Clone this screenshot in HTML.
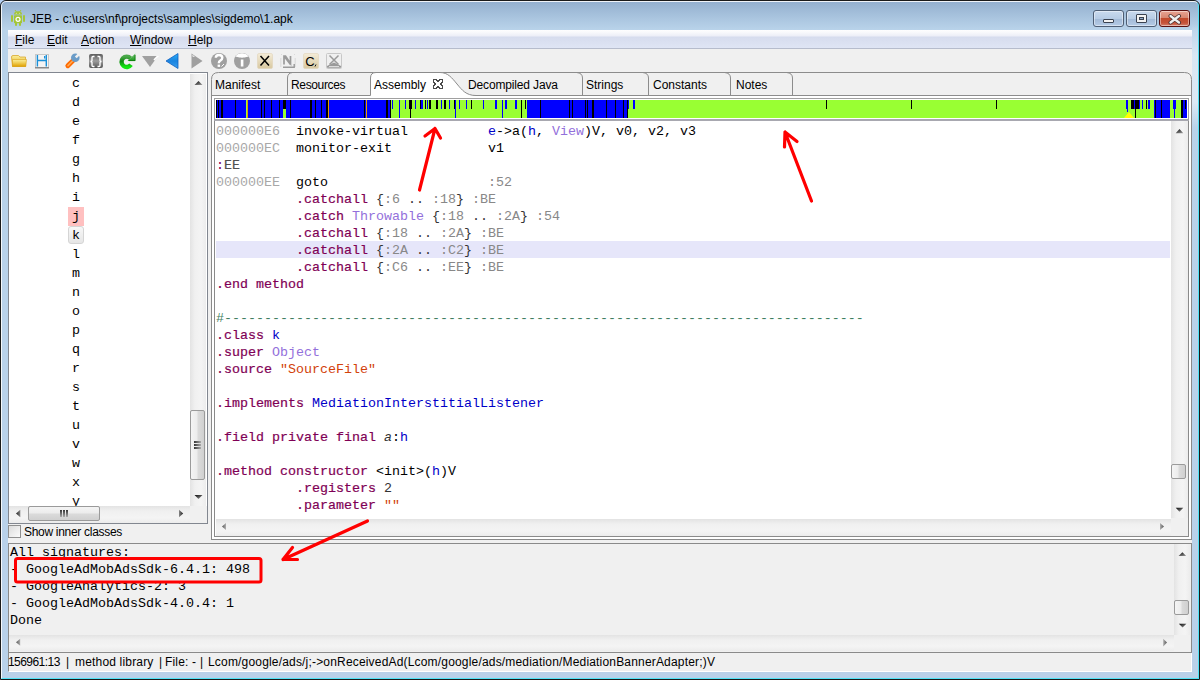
<!DOCTYPE html>
<html><head><meta charset="utf-8">
<style>
*{margin:0;padding:0;box-sizing:border-box}
html,body{width:1200px;height:680px;overflow:hidden;background:#b4d0f4;font-family:"Liberation Sans",sans-serif}
.a,i{position:absolute;display:block}
#win{position:absolute;left:0;top:0;width:1200px;height:680px;border:1px solid #1a1a1a;border-radius:6px 6px 0 0;background:linear-gradient(#92afcf 0,#98b4d2 4px,#abc6e0 18px,#b9d3ea 29px,#b9d1ea 100%);overflow:hidden}
#win:before{content:"";position:absolute;left:0;top:0;right:0;bottom:0;border:1px solid rgba(255,255,255,.85);border-right-color:#4fe3f7;border-bottom-color:#4fe3f7;border-radius:5px 5px 0 0}
.title{left:30px;top:12px;font-size:12px;color:#000;white-space:nowrap}
.wb{top:10px;height:17px;border:1px solid #4e5e74;border-radius:3px;background:linear-gradient(#c9daee 0,#b7cce5 50%,#a1b9d6 51%,#b5cbe6 100%);box-shadow:inset 0 0 0 1px rgba(255,255,255,.45)}
.menubar{left:8px;top:30px;width:1184px;height:19px;background:linear-gradient(#fefefe 0,#f6f7fb 3px,#eceef7 6px,#d6dcee 7px,#dfe5f4 18px);border-bottom:1px solid #b6bccc}
.menubar span{position:absolute;top:3px;font-size:12px;color:#000}
.toolbar{left:8px;top:49px;width:1184px;height:23px;background:#f0f0f0}
.client{left:8px;top:72px;width:1184px;height:600px;background:#f0f0f0}
.mono{font-family:"Liberation Mono",monospace}
.code{font-family:"Liberation Mono",monospace;font-size:13.33px;line-height:17px;white-space:pre;color:#000}
.sbv{background:linear-gradient(90deg,#e3e3e3,#f0f0f0 30%,#f4f4f4 70%,#ececec)}
.sbh{background:linear-gradient(#e3e3e3,#f0f0f0 30%,#f4f4f4 70%,#ececec)}
.tab{top:72px;height:24px;font-size:12px;color:#000;border:1px solid #8a8a8a;border-bottom:none;border-radius:7px 0 0 0;background:#f0f0f0;white-space:nowrap;padding:5px 0 0 3px}
.d{color:#7f0055;font-weight:normal;-webkit-text-stroke:0.2px #7f0055}
.g{color:#888}
.lg{color:#a8a8a8}
.bl{color:#0000c8}
.pu{color:#9370db}
.st{color:#d2420a}
.cm{color:#3f7f5f}
.st1{top:655px;font-size:12px;white-space:pre;letter-spacing:0.18px}
.list{left:9px;top:74px;width:181px;font-family:"Liberation Mono",monospace;font-size:13.33px;line-height:19px;white-space:pre}
.list div{padding-left:63px;height:19px}
</style></head><body>
<div id="win"></div>
<!-- title icon -->
<svg class="a" style="left:10px;top:9px" width="16" height="18" viewBox="0 0 16 18">
 <g fill="#a4c639">
  <rect x="1" y="6" width="2" height="7" rx="1"/><rect x="13" y="6" width="2" height="7" rx="1"/>
  <path d="M4 5.6 Q4 2.3 8 2.3 Q12 2.3 12 5.6 Z"/>
  <rect x="4" y="6.2" width="8" height="8" rx="0.8"/>
  <rect x="5" y="13" width="2" height="4" rx="1"/><rect x="9" y="13" width="2" height="4" rx="1"/>
  <path d="M5 1 L6.5 3 M11 1 L9.5 3" stroke="#a4c639" stroke-width="1"/>
 </g>
 <circle cx="8" cy="10.3" r="2" fill="none" stroke="#fff" stroke-width="1.2"/><circle cx="6.3" cy="4.2" r="0.5" fill="#e8f4c0"/><circle cx="9.7" cy="4.2" r="0.5" fill="#e8f4c0"/>
</svg>
<div class="a" style="left:1192px;top:24px;width:6px;height:104px;background:linear-gradient(rgba(255,255,255,0),rgba(255,255,255,.45) 30%,rgba(255,255,255,.5) 75%,rgba(255,255,255,0))"></div>
<div class="a title">JEB - c:\users\nf\projects\samples\sigdemo\1.apk</div>
<!-- window buttons -->
<div class="a wb" style="left:1093px;width:31px"><i style="left:9px;top:8px;width:11px;height:4px;background:#f2f2f2;border:1px solid #3a4250;border-radius:1px"></i></div>
<div class="a wb" style="left:1126px;width:31px"><i style="left:9px;top:3px;width:11px;height:9px;background:#f2f2f2;border:1px solid #3a4250;border-radius:1px"></i><i style="left:12px;top:6px;width:5px;height:3px;background:#8fa9c8;border:1px solid #3a4250"></i></div>
<div class="a wb" style="left:1159px;width:31px;border-color:#5a1010;background:linear-gradient(#e8a493 0,#d88771 45%,#c24a2c 50%,#c5533a 80%,#d7826e 100%)"><svg class="a" style="left:8px;top:2px" width="14" height="12" viewBox="0 0 14 12"><path d="M2.5 3 L11 9.5 M11 3 L2.5 9.5" stroke="#4a3030" stroke-width="4" stroke-linecap="round"/><path d="M2.5 3 L11 9.5 M11 3 L2.5 9.5" stroke="#f0f0f0" stroke-width="2.3" stroke-linecap="round"/></svg></div>

<div class="a menubar">
 <span style="left:7px"><u>F</u>ile</span>
 <span style="left:39px"><u>E</u>dit</span>
 <span style="left:73px"><u>A</u>ction</span>
 <span style="left:122px"><u>W</u>indow</span>
 <span style="left:180px"><u>H</u>elp</span>
</div>
<div class="a toolbar"></div>
<div class="a client"></div>
<svg class="a" style="left:0;top:49px" width="360" height="23" viewBox="0 49 360 23">
 <defs>
  <linearGradient id="fold" x1="0" y1="0" x2="0" y2="1"><stop offset="0" stop-color="#fbef9a"/><stop offset="0.45" stop-color="#f0cf5a"/><stop offset="1" stop-color="#e0a000"/></linearGradient>
  <linearGradient id="gbox" x1="0" y1="0" x2="0" y2="1"><stop offset="0" stop-color="#5e5e5e"/><stop offset="0.5" stop-color="#9c9c9c"/><stop offset="1" stop-color="#555"/></linearGradient>
  <linearGradient id="grn" x1="0" y1="0" x2="0" y2="1"><stop offset="0" stop-color="#4aa84a"/><stop offset="0.45" stop-color="#108a10"/><stop offset="1" stop-color="#10e810"/></linearGradient><linearGradient id="grh" x1="0" y1="0" x2="0" y2="1"><stop offset="0" stop-color="#80c880"/><stop offset="1" stop-color="#189818"/></linearGradient>
  <linearGradient id="blu" x1="0" y1="0" x2="0" y2="1"><stop offset="0" stop-color="#2ab0f8"/><stop offset="0.5" stop-color="#1a84e0"/><stop offset="1" stop-color="#3aa0f0"/></linearGradient>
  <linearGradient id="beige" x1="0" y1="0" x2="0" y2="1"><stop offset="0" stop-color="#f4ecd8"/><stop offset="1" stop-color="#d8c8a0"/></linearGradient>
 </defs>
 <!-- folder -->
 <path d="M11.5,57 Q11.5,55.5 13,55.5 H18.5 L20,57 H25.5 V66.5 H12.5 Z" fill="url(#fold)" stroke="#d8a830" stroke-width="0.8"/>
 <path d="M12.5,59.5 H26.5 L25.8,66.5 H12.5 Z" fill="url(#fold)" stroke="#d9a21c" stroke-width="0.6"/>
 <!-- save -->
 <rect x="35.5" y="54.5" width="13" height="13" fill="#f4f4f4" stroke="#c8c8c8"/>
 <rect x="35" y="67" width="14" height="1.5" fill="#8a8a8a"/>
 <path d="M37.4,55 V66.5 M46.3,55 V66.5 M37.4,60.5 H46.3" stroke="#1a90d8" stroke-width="1.4" fill="none"/>
 <rect x="44" y="56" width="1.3" height="2.5" fill="#1a90d8"/>
 <!-- wrench -->
 <path d="M67.8,65.8 L73,60.6" stroke="#ff6a00" stroke-width="4.8" stroke-linecap="round"/>
 <path d="M68,65.6 L72.8,60.8" stroke="#ffa850" stroke-width="1.6" stroke-linecap="round"/>
 <circle cx="75.3" cy="57.8" r="4.3" fill="#6a9cc8"/>
 <path d="M75.8,57.3 L79.5,53.6" stroke="#f0f0f0" stroke-width="2.6"/>
 <!-- {} -->
 <rect x="89" y="54" width="14" height="14" rx="2" fill="url(#gbox)"/>
 <path d="M94.5,56.5 H93 Q92,56.5 92,57.5 V60.5 Q92,61.5 90.5,61.5 Q92,61.5 92,62.5 V65.5 Q92,66.5 93,66.5 H94.5 M97.5,56.5 H99 Q100,56.5 100,57.5 V60.5 Q100,61.5 101.5,61.5 Q100,61.5 100,62.5 V65.5 Q100,66.5 99,66.5 H97.5" fill="none" stroke="#fff" stroke-width="1.35"/>
 <!-- refresh -->
 <path d="M130.5,58.2 A5.2,5.2 0 1 0 131,64.8" fill="none" stroke="url(#grn)" stroke-width="4.4"/>
 <path d="M127.5,61 H135.3 V53.5 Z" fill="url(#grh)"/>
 <path d="M129,60.6 H135 V55" fill="none" stroke="#0a7a0a" stroke-width="0.8"/>
 <!-- down triangle -->
 <path d="M142,56 H158 L150,67 Z" fill="#a0a0a0"/>
 <path d="M154,60 L157,56.8 H157.2 L157,57 Z" stroke="#fff" stroke-width="1.6"/>
 <!-- left blue triangle -->
 <path d="M178,53.5 V68.5 L166,61 Z" fill="url(#blu)" stroke="#1060c0" stroke-width="0.8"/>
 <!-- right gray triangle -->
 <path d="M191.5,53.5 V68.5 L202.5,61 Z" fill="#a0a0a0"/>
 <path d="M192.5,56.5 V54.8 L195,57 Z" fill="#fff"/>
 <!-- ? -->
 <circle cx="219" cy="61" r="8" fill="#a0a0a0"/>
 <path d="M215.8,57.8 Q215.8,55 219,55 Q222.3,55 222.3,57.8 Q222.3,59.6 220.3,60.6 Q218.8,61.4 218.8,63.2" fill="none" stroke="#fff" stroke-width="2.4"/>
 <rect x="217.6" y="64.6" width="2.5" height="2.3" fill="#fff"/>
 <path d="M221.5,66.5 L224,64" stroke="#fff" stroke-width="1"/>
 <!-- i -->
 <circle cx="242" cy="61" r="8" fill="#a0a0a0"/>
 <path d="M235.5,56.5 A8,8 0 0 1 248.5,56.5 L244.5,57.5 H239.5 Z" fill="#fff"/>
 <path d="M235.8,56.8 Q240,53 242,58 Q244,53 248.2,56.8 A8,8 0 0 0 235.8,56.8 Z" fill="#fff"/>
 <rect x="240.8" y="59.5" width="2.6" height="7" fill="#fff"/>
 <!-- X beige -->
 <rect x="257.5" y="53.5" width="15" height="15" rx="1.5" fill="url(#beige)" stroke="#e0d4b8" stroke-width="0.6"/>
 <path d="M260.5,56 L269,65.5 M269,56 L260.5,65.5" stroke="#000" stroke-width="1.5"/>
 <!-- N disabled -->
 <path d="M280.8,58 V67 M295.2,58 V67 M281,54 L282,55 M295,54 L294,55" stroke="#d4d4d4" stroke-width="0.8"/>
 <path d="M284,64.5 V56 H285.5 L290.5,63.5 V56 M284,56 L290.5,64.5" stroke="#9a9a9a" stroke-width="1.7" fill="none"/>
 <path d="M283,67.2 H294.2 V64" stroke="#9a9a9a" stroke-width="1.4" fill="none"/>
 <!-- C beige -->
 <rect x="303.5" y="53.5" width="15" height="15" rx="1.5" fill="url(#beige)" stroke="#e0d4b8" stroke-width="0.6"/>
 <text x="310" y="65.5" text-anchor="middle" font-family="Liberation Sans" font-size="13" fill="#000">C</text>
 <path d="M316,64.5 L315,66.5" stroke="#000" stroke-width="0.9"/>
 <!-- X disabled -->
 <rect x="326.5" y="53.5" width="15" height="15" rx="1" fill="none" stroke="#c8c8c8"/>
 <path d="M329.5,55.5 L338.5,64.5 M338.5,55.5 L329.5,64.5" stroke="#9a9a9a" stroke-width="1.5"/>
 <path d="M327,67.8 L327,66 L334,62.5 L341,66 V67.8 Z" fill="#9a9a9a"/>
 <path d="M329,66.5 H339" stroke="#eee" stroke-width="0.8"/>
 </svg>


<!-- left panel -->
<div class="a" style="left:8px;top:72px;width:200px;height:452px;border:1px solid #828790;background:#fff"></div>
<div class="a" style="left:68px;top:207px;width:16px;height:19px;background:#ffc0c0"></div>
<div class="a" style="left:68px;top:226px;width:16px;height:18px;border:1px solid #d5d5d5;border-radius:3px;background:linear-gradient(#f8f8f8,#e6e6e6)"></div>
<div class="a list"><div>c</div><div>d</div><div>e</div><div>f</div><div>g</div><div>h</div><div>i</div><div>j</div><div>k</div><div>l</div><div>m</div><div>n</div><div>o</div><div>p</div><div>q</div><div>r</div><div>s</div><div>t</div><div>u</div><div>v</div><div>w</div><div>x</div><div>y</div></div>
<div class="a sbv" style="left:190px;top:74px;width:16px;height:432px"></div>
<div class="a" style="left:190px;top:410px;width:15px;height:70px;border:1px solid #9a9a9a;border-radius:2px;background:linear-gradient(90deg,#f4f4f4,#ececec 45%,#dadada 55%,#d0d0d0)"></div>
<i style="left:194px;top:441px;width:7px;height:2px;background:linear-gradient(90deg,#333,#aaa)"></i><i style="left:194px;top:444px;width:7px;height:2px;background:linear-gradient(90deg,#333,#aaa)"></i><i style="left:194px;top:447px;width:7px;height:2px;background:linear-gradient(90deg,#333,#aaa)"></i>
<div class="a sbh" style="left:9px;top:506px;width:181px;height:17px"></div>
<div class="a" style="left:190px;top:506px;width:17px;height:17px;background:#f0f0f0"></div>
<div class="a" style="left:28px;top:506px;width:72px;height:15px;border:1px solid #9a9a9a;border-radius:2px;background:linear-gradient(#f4f4f4,#ececec 45%,#dadada 55%,#d0d0d0)"></div>
<i style="left:60px;top:510px;width:2px;height:7px;background:linear-gradient(#333,#aaa)"></i><i style="left:63px;top:510px;width:2px;height:7px;background:linear-gradient(#333,#aaa)"></i><i style="left:66px;top:510px;width:2px;height:7px;background:linear-gradient(#333,#aaa)"></i>

<!-- checkbox -->
<div class="a" style="left:8px;top:525px;width:13px;height:13px;border:1px solid #8f8f8f;background:linear-gradient(135deg,#dcdcdc,#fbfbfb)"></div>
<div class="a" style="left:24px;top:525px;font-size:12px;white-space:nowrap;letter-spacing:-0.3px">Show inner classes</div>

<!-- tab folder -->
<div class="a" style="left:211px;top:95px;width:981px;height:445px;border:1px solid #8a8a8a;border-top:none;background:#fff"></div>
<i style="left:211px;top:95px;width:981px;height:1px;background:#8a8a8a"></i>
<div class="a" style="left:214px;top:98px;width:975px;height:439px;border:1px solid #8a8a8a;background:#fff"></div>
<svg class="a" style="left:0;top:0" width="1200" height="100" viewBox="0 0 1200 100">
 <path d="M211.5,96 V79.5 Q211.5,72.5 218.5,72.5 H1184.5 Q1191.5,72.5 1191.5,79.5 V96" fill="#f0f0f0" stroke="#8c8c8c"/>
 <path d="M211,95.5 H1192" stroke="#8c8c8c"/>
 <path d="M287.5,95 V78 Q287.5,73 292.5,72.5" fill="none" stroke="#8c8c8c"/>
 <path d="M370.5,96 V78 Q370.5,72.5 376,72.5 H440 C448,72.5 452,78 457,84 C462,90 466,95.5 476,95.5 V97 H371 Z" fill="#fff" stroke="none"/>
 <path d="M370.5,95.5 V78 Q370.5,72.5 376,72.5 H440 C448,72.5 452,78 457,84 C462,90 466,95.5 476,95.5" fill="none" stroke="#8c8c8c"/>
 <path d="M576.5,72.5 Q582.5,73 582.5,78 V95 M642.5,72.5 Q648.5,73 648.5,78 V95 M724.5,72.5 Q730.5,73 730.5,78 V95 M786.5,72.5 Q792.5,73 792.5,78 V95" fill="none" stroke="#8c8c8c"/>
 <path d="M433.5,79.5 H436 L438,81.5 L440,79.5 H442.5 V82 L440.5,84 L442.5,86 V88.5 H440 L438,86.5 L436,88.5 H433.5 V86 L435.5,84 L433.5,82 Z" fill="#fff" stroke="#4a4a4a" stroke-width="1.25" shape-rendering="crispEdges"/>
</svg>
<div class="a" style="left:215px;top:78px;font-size:12px">Manifest</div>
<div class="a" style="left:291px;top:78px;font-size:12px;letter-spacing:-0.35px">Resources</div>
<div class="a" style="left:374px;top:78px;font-size:12px">Assembly</div>
<div class="a" style="left:468px;top:78px;font-size:12px;letter-spacing:-0.15px">Decompiled Java</div>
<div class="a" style="left:586px;top:78px;font-size:12px">Strings</div>
<div class="a" style="left:653px;top:78px;font-size:12px">Constants</div>
<div class="a" style="left:736px;top:78px;font-size:12px">Notes</div>


<!-- overview -->
<div class="a" style="left:214px;top:98px;width:975px;height:23px;border:1px solid #a0a0a0;border-bottom:2px solid #a8a8b0;background:#fff"></div>
<div class="a" style="left:216px;top:100px;width:971px;height:18px;overflow:hidden"><i style="left:0px;top:0px;width:175px;height:18px;background:#0000ff"></i><i style="left:175px;top:0px;width:136px;height:18px;background:#99ff33"></i><i style="left:311px;top:0px;width:101px;height:18px;background:#0000ff"></i><i style="left:412px;top:0px;width:498px;height:18px;background:#99ff33"></i><i style="left:910px;top:0px;width:28px;height:18px;background:#99ff33"></i><i style="left:938px;top:0px;width:16px;height:18px;background:#0000ff"></i><i style="left:954px;top:0px;width:11px;height:18px;background:#99ff33"></i><i style="left:965px;top:0px;width:6px;height:18px;background:#0000ff"></i><i style="left:0px;top:0px;width:1px;height:18px;background:#000"></i><i style="left:2px;top:0px;width:1px;height:18px;background:#000"></i><i style="left:19px;top:0px;width:1px;height:18px;background:#000"></i><i style="left:45px;top:0px;width:1px;height:18px;background:#000"></i><i style="left:48px;top:0px;width:1px;height:18px;background:#000"></i><i style="left:55px;top:0px;width:1px;height:18px;background:#000"></i><i style="left:63px;top:0px;width:1px;height:18px;background:#000"></i><i style="left:74px;top:0px;width:1px;height:18px;background:#000"></i><i style="left:99px;top:0px;width:1px;height:18px;background:#000"></i><i style="left:105px;top:0px;width:1px;height:18px;background:#000"></i><i style="left:148px;top:0px;width:1px;height:18px;background:#000"></i><i style="left:324px;top:0px;width:1px;height:18px;background:#000"></i><i style="left:353px;top:0px;width:1px;height:18px;background:#000"></i><i style="left:356px;top:0px;width:1px;height:18px;background:#000"></i><i style="left:369px;top:0px;width:1px;height:18px;background:#000"></i><i style="left:371px;top:0px;width:1px;height:18px;background:#000"></i><i style="left:390px;top:0px;width:1px;height:18px;background:#000"></i><i style="left:399px;top:0px;width:1px;height:18px;background:#000"></i><i style="left:407px;top:0px;width:1px;height:18px;background:#000"></i><i style="left:411px;top:0px;width:1px;height:18px;background:#000"></i><i style="left:5px;top:0px;width:2px;height:18px;background:#000"></i><i style="left:94px;top:0px;width:2px;height:18px;background:#000"></i><i style="left:110px;top:0px;width:2px;height:18px;background:#000"></i><i style="left:170px;top:0px;width:2px;height:18px;background:#000"></i><i style="left:174px;top:0px;width:1px;height:18px;background:#000"></i><i style="left:376px;top:0px;width:2px;height:18px;background:#000"></i><i style="left:30px;top:0px;width:1px;height:18px;background:#99ff33"></i><i style="left:31px;top:0px;width:1px;height:18px;background:#e89a00"></i><i style="left:112px;top:0px;width:1px;height:18px;background:#e89a00"></i><i style="left:150px;top:0px;width:1px;height:18px;background:#e89a00"></i><i style="left:67px;top:0px;width:3px;height:9px;background:#000"></i><i style="left:67px;top:9px;width:3px;height:9px;background:#99ff33"></i><i style="left:30px;top:9px;width:1px;height:9px;background:#99ff33"></i><i style="left:176px;top:0px;width:1px;height:9px;background:#0000ff"></i><i style="left:189px;top:0px;width:1px;height:9px;background:#0000ff"></i><i style="left:199px;top:0px;width:1px;height:9px;background:#0000ff"></i><i style="left:225px;top:0px;width:1px;height:9px;background:#0000ff"></i><i style="left:233px;top:0px;width:1px;height:9px;background:#0000ff"></i><i style="left:243px;top:0px;width:1px;height:9px;background:#0000ff"></i><i style="left:250px;top:0px;width:1px;height:9px;background:#0000ff"></i><i style="left:267px;top:0px;width:1px;height:9px;background:#0000ff"></i><i style="left:412px;top:0px;width:1px;height:9px;background:#0000ff"></i><i style="left:183px;top:0px;width:1px;height:18px;background:#0000ff"></i><i style="left:239px;top:0px;width:1px;height:18px;background:#0000ff"></i><i style="left:286px;top:0px;width:1px;height:18px;background:#0000ff"></i><i style="left:194px;top:0px;width:1px;height:18px;background:#000"></i><i style="left:305px;top:0px;width:1px;height:18px;background:#000"></i><i style="left:193px;top:0px;width:3px;height:9px;background:#000"></i><i style="left:204px;top:0px;width:1px;height:9px;background:#000"></i><i style="left:205px;top:0px;width:2px;height:9px;background:#0000ff"></i><i style="left:209px;top:0px;width:1px;height:9px;background:#000"></i><i style="left:211px;top:0px;width:1px;height:9px;background:#0000ff"></i><i style="left:213px;top:0px;width:2px;height:9px;background:#000"></i><i style="left:220px;top:0px;width:2px;height:9px;background:#000"></i><i style="left:228px;top:0px;width:2px;height:9px;background:#000"></i><i style="left:238px;top:0px;width:1px;height:9px;background:#000"></i><i style="left:255px;top:0px;width:1px;height:9px;background:#000"></i><i style="left:279px;top:0px;width:2px;height:9px;background:#0000ff"></i><i style="left:289px;top:0px;width:2px;height:9px;background:#0000ff"></i><i style="left:299px;top:0px;width:2px;height:9px;background:#0000ff"></i><i style="left:309px;top:0px;width:1px;height:9px;background:#000"></i><i style="left:417px;top:0px;width:2px;height:9px;background:#0000ff"></i><i style="left:610px;top:0px;width:1px;height:9px;background:#000"></i><i style="left:695px;top:0px;width:1px;height:9px;background:#000"></i><i style="left:780px;top:0px;width:1px;height:9px;background:#000"></i><i style="left:910px;top:0px;width:2px;height:9px;background:#0000ff"></i><i style="left:911px;top:0px;width:1px;height:12px;background:#0000ff"></i><i style="left:915px;top:0px;width:3px;height:9px;background:#000"></i><i style="left:918px;top:0px;width:1px;height:9px;background:#0000ff"></i><i style="left:919px;top:0px;width:4px;height:9px;background:#000"></i><i style="left:923px;top:0px;width:1px;height:9px;background:#0000ff"></i><i style="left:919px;top:0px;width:1px;height:18px;background:#000"></i><i style="left:926px;top:0px;width:1px;height:9px;background:#0000ff"></i><i style="left:930px;top:0px;width:1px;height:9px;background:#000"></i><i style="left:932px;top:0px;width:2px;height:9px;background:#0000ff"></i><i style="left:939px;top:0px;width:1px;height:18px;background:#000"></i><i style="left:945px;top:0px;width:1px;height:18px;background:#000"></i><i style="left:957px;top:0px;width:3px;height:9px;background:#0000ff"></i><i style="left:958px;top:0px;width:1px;height:18px;background:#0000ff"></i><i style="left:965px;top:0px;width:2px;height:18px;background:#000"></i><i style="left:969px;top:0px;width:1px;height:9px;background:#000"></i><i style="left:908px;top:12px;width:0;height:0;border-left:5px solid transparent;border-right:5px solid transparent;border-bottom:6px solid #ffff00;background:none"></i></div>

<!-- code -->
<div class="a" style="left:216px;top:241px;width:954px;height:17px;background:#e6e6fa"></div>
<div class="a code" style="left:216px;top:123px"><span class="lg">000000E6</span>  invoke-virtual          <span class="bl">e</span>-&gt;a(<span class="bl">h</span>, <span class="pu">View</span>)V, v0, v2, v3
<span class="lg">000000EC</span>  monitor-exit            v1
<span style="color:#7f0055">:</span><span style="color:#505050;-webkit-text-stroke:0.2px #505050">EE</span>
<span class="lg">000000EE</span>  goto                    <span class="g">:52</span>
          <span class="d">.catchall</span> <span style="color:#333">{</span><span class="g">:6</span> <span style="color:#333">..</span> <span class="g">:18</span><span style="color:#333">}</span> <span class="g">:BE</span>
          <span class="d">.catch</span> <span class="pu">Throwable</span> <span style="color:#333">{</span><span class="g">:18</span> <span style="color:#333">..</span> <span class="g">:2A</span><span style="color:#333">}</span> <span class="g">:54</span>
          <span class="d">.catchall</span> <span style="color:#333">{</span><span class="g">:18</span> <span style="color:#333">..</span> <span class="g">:2A</span><span style="color:#333">}</span> <span class="g">:BE</span>
          <span class="d">.catchall</span> <span style="color:#333">{</span><span class="g">:2A</span> <span style="color:#333">..</span> <span class="g">:C2</span><span style="color:#333">}</span> <span class="g">:BE</span>
          <span class="d">.catchall</span> <span style="color:#333">{</span><span class="g">:C6</span> <span style="color:#333">..</span> <span class="g">:EE</span><span style="color:#333">}</span> <span class="g">:BE</span>
<span class="d">.end method</span>

<span class="cm">#--------------------------------------------------------------------------------</span>
<span class="d">.class</span> <span class="bl">k</span>
<span class="d">.super</span> <span class="pu">Object</span>
<span class="d">.source</span> <span class="st">"SourceFile"</span>

<span class="d">.implements</span> <span class="bl">MediationInterstitialListener</span>

<span class="d">.field private final</span> <i style="position:static;display:inline;color:#333">a</i>:<span class="bl">h</span>

<span class="d">.method constructor</span> &lt;init&gt;(<span class="bl">h</span>)V
          <span class="d">.registers</span> <span style="color:#333">2</span>
          <span class="d">.parameter</span> <span class="st">""</span></div>
<div class="a sbv" style="left:1171px;top:121px;width:17px;height:397px"></div>
<div class="a" style="left:1171px;top:464px;width:15px;height:15px;border:1px solid #9a9a9a;border-radius:2px;background:linear-gradient(90deg,#f4f4f4,#ececec 45%,#dadada 55%,#d0d0d0)"></div>
<div class="a sbh" style="left:216px;top:519px;width:955px;height:17px"></div>
<div class="a" style="left:1171px;top:518px;width:17px;height:18px;background:#f0f0f0"></div>

<!-- console -->
<div class="a" style="left:8px;top:543px;width:1184px;height:111px;border:1px solid #8a8a8a;border-bottom:2px solid #8a8a8a;background:#f0f0f0"></div>
<div class="a code" style="left:10px;top:544px">All signatures:
- GoogleAdMobAdsSdk-6.4.1: 498
- GoogleAnalytics-2: 3
- GoogleAdMobAdsSdk-4.0.4: 1
Done</div>
<div class="a sbv" style="left:1174px;top:544px;width:16px;height:91px"></div>
<div class="a" style="left:1174px;top:600px;width:15px;height:15px;border:1px solid #9a9a9a;border-radius:2px;background:linear-gradient(90deg,#f4f4f4,#ececec 45%,#dadada 55%,#d0d0d0)"></div>
<div class="a sbh" style="left:9px;top:635px;width:1165px;height:16px"></div>

<!-- status bar -->
<div class="a" style="left:8px;top:653px;width:1184px;height:19px;border-left:1px solid #8a8a8a;border-bottom:1px solid #fff;border-right:1px solid #fff;background:#f0f0f0"></div>
<div class="a st1" style="left:8px;letter-spacing:-0.55px">156961:13</div><div class="a st1" style="left:66px">|</div><div class="a st1" style="left:75px">method library</div><div class="a st1" style="left:159px">|</div><div class="a st1" style="left:165px">File: -</div><div class="a st1" style="left:200px">|</div><div class="a st1" style="left:208px">Lcom/google/ads/j;-&gt;onReceivedAd(Lcom/google/ads/mediation/MediationBannerAdapter;)V</div>

<svg class="a" style="left:0;top:0" width="1200" height="680" viewBox="0 0 1200 680">
 <defs>
  <linearGradient id="agu" x1="0.2" y1="0" x2="0.9" y2="1"><stop offset="0" stop-color="#111"/><stop offset="1" stop-color="#999"/></linearGradient>
  <linearGradient id="agd" x1="0.1" y1="0" x2="0.9" y2="1"><stop offset="0" stop-color="#111"/><stop offset="1" stop-color="#999"/></linearGradient>
  <linearGradient id="agl" x1="0" y1="0" x2="1" y2="0"><stop offset="0" stop-color="#222"/><stop offset="1" stop-color="#888"/></linearGradient>
  <linearGradient id="agr" x1="1" y1="0" x2="0" y2="0"><stop offset="0" stop-color="#222"/><stop offset="1" stop-color="#888"/></linearGradient>
  <linearGradient id="agl2" x1="0" y1="0" x2="1" y2="0"><stop offset="0" stop-color="#555"/><stop offset="1" stop-color="#b0b0b0"/></linearGradient>
  <linearGradient id="agr2" x1="1" y1="0" x2="0" y2="0"><stop offset="0" stop-color="#555"/><stop offset="1" stop-color="#b0b0b0"/></linearGradient>
 </defs>
 <path d="M198.5,81 L202.5,85 H194.5 Z" fill="url(#agu)"/>
 <path d="M198.5,499 L202.5,495 H194.5 Z" fill="url(#agd)"/>
 <path d="M16,513.5 L20.3,509.7 V517.3 Z" fill="url(#agl)"/>
 <path d="M183.2,513.5 L179,509.7 V517.3 Z" fill="url(#agr)"/>
 <path d="M1179.5,129 L1183.3,133.2 H1175.7 Z" fill="url(#agu)"/>
 <path d="M1179.5,511.8 L1183.3,507.8 H1175.7 Z" fill="url(#agd)"/>
 <path d="M222,526.5 L226,523 V530 Z" fill="url(#agl2)"/>
 <path d="M1164,526.5 L1160,523 V530 Z" fill="url(#agr2)"/>
 <path d="M1182.4,552.2 L1186.2,556 H1178.6 Z" fill="url(#agu)"/>
 <path d="M1182.6,627.6 L1186.4,623.8 H1178.8 Z" fill="url(#agd)"/>
 <path d="M16,642.3 L20.2,638.8 V645.8 Z" fill="url(#agl2)"/>
 <path d="M1167,642.6 L1163.2,638.8 V646.4 Z" fill="url(#agr2)"/>
</svg>
<!-- annotations -->
<svg class="a" style="left:0;top:0" width="1200" height="680" viewBox="0 0 1200 680">
 <g stroke="#ff0000" stroke-width="3.2" fill="none" stroke-linecap="round" stroke-linejoin="round">
  <path d="M419.5 190 L435 128.5 M425 136 L435 128.5 L440.5 138"/>
  <path d="M811.5 201 L785 132 M784.5 147 L785 132 L797 141.5"/>
  <path d="M367.5 521 L283 559.5 M292.5 547.5 L283 559.5 L297.5 559.5"/>
 </g>
 <rect x="15.5" y="558.5" width="245.5" height="23.5" rx="2" fill="none" stroke="#ff0000" stroke-width="3"/>
</svg>
</body></html>
